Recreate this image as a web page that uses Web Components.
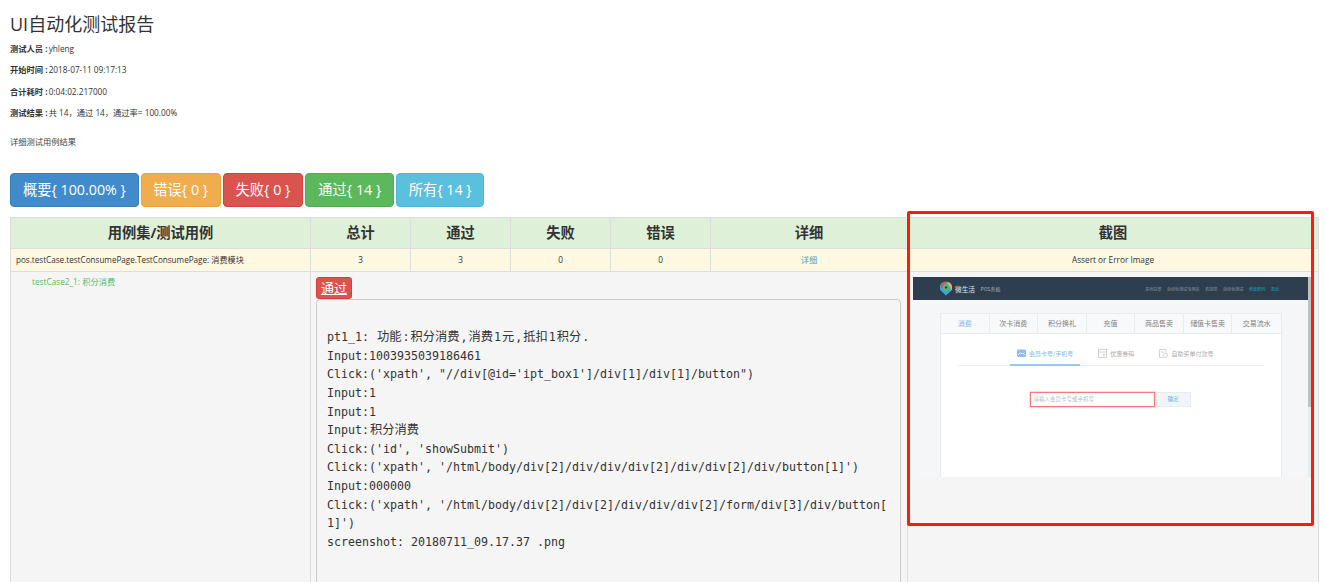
<!DOCTYPE html>
<html>
<head>
<meta charset="utf-8">
<title>UI自动化测试报告</title>
<style>
    html, body { margin: 0; height: 582px; overflow: hidden; background: #fff; }
    body {
        font-family: "Open Sans", "Noto Sans CJK SC", sans-serif;
        color: #333;
    }
    report-page { position: relative; }
    case-log .w { font-size: 12.25px; margin: 0 1px; }
</style>
</head>
<body>
<report-page>
    <report-info slot="info" title-text="UI自动化测试报告">
        <info-line label="测试人员">yhleng</info-line>
        <info-line label="开始时间">2018-07-11 09:17:13</info-line>
        <info-line label="合计耗时">0:04:02.217000</info-line>
        <info-line label="测试结果">共 14，通过 14，通过率= 100.00%</info-line>
    </report-info>
    <filter-bar slot="filters">
        <filter-button kind="primary">概要{ 100.00% }</filter-button>
        <filter-button kind="warning">错误{ 0 }</filter-button>
        <filter-button kind="danger">失败{ 0 }</filter-button>
        <filter-button kind="success">通过{ 14 }</filter-button>
        <filter-button kind="info">所有{ 14 }</filter-button>
    </filter-bar>
    <result-table slot="table">
        <case-log slot="log">
            <div>pt1_1: <span class="w">功能</span>:<span class="w">积分消费</span>,<span class="w">消费</span>1<span class="w">元</span>,<span class="w">抵扣</span>1<span class="w">积分</span>.</div>
            <div>Input:1003935039186461</div>
            <div>Click:('xpath', "//div[@id='ipt_box1']/div[1]/div[1]/button")</div>
            <div>Input:1</div>
            <div>Input:1</div>
            <div>Input:<span class="w">积分消费</span></div>
            <div>Click:('id', 'showSubmit')</div>
            <div>Click:('xpath', '/html/body/div[2]/div/div/div[2]/div/div[2]/div/button[1]')</div>
            <div>Input:000000</div>
            <div>Click:('xpath', '/html/body/div[2]/div[2]/div/div/div[2]/form/div[3]/div/button[1]')</div>
            <div>screenshot: 20180711_09.17.37 .png</div>
        </case-log>
        <pos-shot slot="shot"></pos-shot>
    </result-table>
</report-page>

<script>
class ReportPage extends HTMLElement {
    constructor() {
        super();
        this.attachShadow({ mode: 'open' });
        this.shadowRoot.innerHTML = `
            <style>
                :host { display: block; height: 582px; overflow: hidden; }
                .wrap { display: flex; flex-direction: column; padding: 0 6px 0 10px; }
                .mark {
                    position: absolute;
                    left: 907px;
                    top: 211px;
                    width: 401px;
                    height: 309px;
                    border: 3px solid #ff1a0e;
                    border-radius: 2px;
                    pointer-events: none;
                }
            </style>
            <div class="wrap">
                <slot name="info"></slot>
                <slot name="filters"></slot>
                <slot name="table"></slot>
            </div>
            <div class="mark"></div>
        `;
    }
}

class ReportInfo extends HTMLElement {
    constructor() {
        super();
        this.attachShadow({ mode: 'open' });
        this.shadowRoot.innerHTML = `
            <style>
                :host { display: block; }
                h3 { margin: 0; padding-top: 13px; font-size: 18px; line-height: 22px; font-weight: 400; height: 22px; }
                .lines { display: flex; flex-direction: column; gap: 0; padding-top: 3px; }
                .detail { margin-top: 13px; font-size: 8.25px; line-height: 12px; color: #444; }
            </style>
            <h3>${this.getAttribute('title-text')}</h3>
            <div class="lines"><slot></slot></div>
            <div class="detail">详细测试用例结果</div>
        `;
    }
}

class InfoLine extends HTMLElement {
    constructor() {
        super();
        this.attachShadow({ mode: 'open' });
        this.shadowRoot.innerHTML = `
            <style>
                :host { display: block; height: 21.3px; font-size: 8.25px; line-height: 21.3px; }
                b { font-weight: 700; margin-right: -1px; }
            </style>
            <b>${this.getAttribute('label')} :</b> <slot></slot>
        `;
    }
}

class FilterBar extends HTMLElement {
    constructor() {
        super();
        this.attachShadow({ mode: 'open' });
        this.shadowRoot.innerHTML = `
            <style>
                :host { display: flex; gap: 2px; margin-top: 25px; margin-bottom: 10px; }
            </style>
            <slot></slot>
        `;
    }
}

class FilterButton extends HTMLElement {
    constructor() {
        super();
        this.attachShadow({ mode: 'open' });
        this.shadowRoot.innerHTML = `
            <style>
                :host {
                    --bg: #428bca;
                    --edge: #357ebd;
                    display: block;
                    box-sizing: border-box;
                    height: 34px;
                    padding: 0 11.5px;
                    border: 1px solid var(--edge);
                    border-radius: 4px;
                    background: var(--bg);
                    color: #fff;
                    font-size: 14.25px;
                    line-height: 32px;
                    white-space: nowrap;
                }
                :host([kind="primary"]), :host([kind="success"]), :host([kind="danger"]) { padding: 0 12px; }
                :host([kind="warning"]) { --bg: #f0ad4e; --edge: #eea236; }
                :host([kind="danger"]) { --bg: #d9534f; --edge: #d43f3a; }
                :host([kind="success"]) { --bg: #5cb85c; --edge: #4cae4c; }
                :host([kind="info"]) { --bg: #5bc0de; --edge: #46b8da; }
            </style>
            <slot></slot>
        `;
    }
}

class ResultTable extends HTMLElement {
    constructor() {
        super();
        this.attachShadow({ mode: 'open' });
        const heads = ['用例集/测试用例', '总计', '通过', '失败', '错误', '详细', '截图'];
        this.shadowRoot.innerHTML = `
            <style>
                :host { display: block; }
                .grid {
                    display: grid;
                    grid-template-columns: 300px 100px 100px 100px 100px 197px 411px;
                    grid-template-rows: 31px 23px 330px;
                    border-top: 1px solid #ddd;
                    border-left: 1px solid #ddd;
                }
                .grid > div {
                    box-sizing: border-box;
                    border-right: 1px solid #ddd;
                    border-bottom: 1px solid #ddd;
                }
                .head {
                    background: #dff0d8;
                    font-size: 14.25px;
                    font-weight: 700;
                    line-height: 30px;
                    text-align: center;
                }
                .sum {
                    background: #fef8e3;
                    font-size: 8.25px;
                    line-height: 22px;
                    text-align: center;
                }
                .sum.name { text-align: left; padding-left: 5px; font-size: 8.15px; }
                .sum a { color: #4fa3b5; }
                .body { background: #f5f5f5; }
                .case { padding: 4px 0 0 21px; font-size: 8.25px; line-height: 12px; color: #5cb85c; }
                .log { grid-column: 2 / 7; padding: 5px 5px 0 5px; display: flex; flex-direction: column; align-items: flex-start; }
                .tag {
                    box-sizing: border-box;
                    height: 22px;
                    width: 36px;
                    border-radius: 3px;
                    border: 1px solid #d43f3a;
                    background: #d9534f;
                    color: #fff;
                    font-size: 13px;
                    line-height: 20px;
                    text-align: center;
                    text-decoration: underline;
                }
                .shot { padding: 5px 0 0 5px; }
            </style>
            <div class="grid">
                ${heads.map(h => `<div class="head">${h}</div>`).join('')}
                <div class="sum name">pos.testCase.testConsumePage.TestConsumePage: 消费模块</div>
                <div class="sum">3</div>
                <div class="sum">3</div>
                <div class="sum">0</div>
                <div class="sum">0</div>
                <div class="sum"><a>详细</a></div>
                <div class="sum">Assert or Error Image</div>
                <div class="body case">testCase2_1: 积分消费</div>
                <div class="body log">
                    <span class="tag">通过</span>
                    <slot name="log"></slot>
                </div>
                <div class="body shot"><slot name="shot"></slot></div>
            </div>
        `;
    }
}

class CaseLog extends HTMLElement {
    constructor() {
        super();
        this.attachShadow({ mode: 'open' });
        this.shadowRoot.innerHTML = `
            <style>
                :host {
                    display: block;
                    box-sizing: border-box;
                    align-self: stretch;
                    margin-right: 1px;
                    height: 320px;
                    /* the log starts with an empty line */
                    padding: 28.1px 10px 10px;
                    border: 1px solid #ccc;
                    border-radius: 4px;
                    background: #f5f5f5;
                    font-family: "DejaVu Sans Mono", "Noto Sans CJK SC", monospace;
                    font-size: 11.63px;
                    line-height: 18.6px;
                    color: #333;
                    word-break: break-all;
                    line-break: anywhere;
                }
            </style>
            <slot></slot>
        `;
    }
}

class PosShot extends HTMLElement {
    constructor() {
        super();
        this.attachShadow({ mode: 'open' });
        const menu = ['消费', '次卡消费', '积分换礼', '充值', '商品售卖', '储值卡售卖', '交易流水'];
        this.shadowRoot.innerHTML = `
            <style>
                :host {
                    display: flex;
                    width: 398px;
                    height: 200px;
                    overflow: hidden;
                    font-family: "Noto Sans CJK SC", sans-serif;
                    color: #888;
                }
                .page { width: 395px; flex: none; background: #f5f6f8; }
                .bar { width: 3px; flex: none; background: #ececec; }
                .thumb { height: 130px; background: #c1c1c1; }
                .top {
                    display: flex;
                    align-items: center;
                    box-sizing: border-box;
                    height: 23px;
                    padding: 0 29px 0 27px;
                    background: #2f3e4f;
                    color: #8c98a3;
                    font-size: 4.1px;
                    gap: 5.5px;
                }
                .logo { margin-right: -2.5px; }
                .brand { font-size: 6.7px; color: #dfe4e8; }
                .pos { flex: 1; font-size: 5px; color: #aab3bb; }
                .on { color: #0ea5c6; }
                .card { margin: 13px 26px 0 27px; height: 164px; background: #fff; border: 1px solid #e8ecef; border-bottom: 0; box-sizing: border-box; }
                .menu { display: grid; grid-template-columns: repeat(7, 1fr); height: 20px; background: #f8f9fa; border-bottom: 1px solid #e8ecef; box-sizing: border-box; }
                .menu span { font-size: 7px; line-height: 19px; text-align: center; border-right: 1px solid #e8ecef; color: #808080; white-space: nowrap; }
                .menu span:first-child { color: #7fb1ea; }
                .menu span:last-child { border-right: 0; }
                .tabs { display: flex; gap: 11px; margin: 15px 17px 0; padding-left: 52px; height: 16px; border-bottom: 1px solid #eef1f3; font-size: 6px; }
                .tab { display: flex; align-items: flex-start; gap: 3px; padding: 0 7px; height: 16px; box-sizing: border-box; color: #aaa; line-height: 10px; white-space: nowrap; }
                .tab.on { color: #7fb9ef; border-bottom: 2px solid #8fcbf5; height: 17px; }
                .tab svg { width: 9px; height: 9px; flex: none; }
                .form { display: flex; justify-content: center; gap: 1px; margin-top: 26px; padding-right: 2px; }
                .input { box-sizing: border-box; width: 125px; height: 15px; border: 1px solid #f8787a; box-shadow: 0 0 0 .5px #fba; padding-left: 3px; font-size: 5.5px; line-height: 13px; color: #bbb; }
                .ok { box-sizing: border-box; width: 35px; height: 15px; background: #f2f5f7; border: 1px solid #e8ecef; font-size: 5.5px; line-height: 13px; text-align: center; color: #6aa9e8; }
            </style>
            <div class="page">
                <div class="top">
                    <svg class="logo" width="12" height="15" viewBox="0 0 12 15">
                        <path d="M6 14.5L2 10.8A5.6 5.6 0 0 1 6 .8A5.6 5.6 0 0 1 10 10.8z" fill="#3aa8dc"/>
                        <path d="M.6 6.4A5.6 5.6 0 0 1 8 1.2A5 5 0 0 0 3 6.6z" fill="#e4503e"/>
                        <path d="M7.2 1A5.6 5.6 0 0 1 10 10.8A5 5 0 0 0 9 4.5z" fill="#f3b62f"/>
                        <circle cx="6" cy="6.4" r="2.9" fill="#6fb54a"/>
                        <circle cx="6" cy="6.4" r="1.2" fill="#2f3e4f"/>
                    </svg>
                    <span class="brand">微生活</span>
                    <span class="pos">POS系统</span>
                    <span>深圳总部</span><span>自动化测试专用店</span><span>欢迎您</span><span>自动化测试</span><span class="on">修改密码</span><span class="on">退出</span>
                </div>
                <div class="card">
                    <div class="menu">${menu.map(m => `<span>${m}</span>`).join('')}</div>
                    <div class="tabs">
                        <div class="tab on"><svg viewBox="0 0 9 9"><rect y=".5" width="9" height="7.5" rx="1" fill="#8fbdf0"/><path d="M1 6L3.5 3.5L5 5L6 4L8 6" fill="none" stroke="#fff" stroke-width=".7"/></svg>会员卡号/手机号</div>
                        <div class="tab"><svg viewBox="0 0 9 9" fill="none" stroke="#c8c8c8" stroke-width=".8"><rect x=".5" y=".5" width="8" height="8"/><path d="M.5 3H8.5M5 5.5H7M6 5V7"/></svg>优惠券码</div>
                        <div class="tab"><svg viewBox="0 0 9 9" fill="none" stroke="#c8c8c8" stroke-width=".8"><path d="M4 8.5H.5V.5H7V3.5M2 3H5"/><circle cx="6.3" cy="6.3" r="2.2"/></svg>自助买单付款号</div>
                    </div>
                    <div class="form">
                        <div class="input">请输入会员卡号或手机号</div>
                        <div class="ok">确定</div>
                    </div>
                </div>
            </div>
            <div class="bar"><div class="thumb"></div></div>
        `;
    }
}

customElements.define('report-page', ReportPage);
customElements.define('report-info', ReportInfo);
customElements.define('info-line', InfoLine);
customElements.define('filter-bar', FilterBar);
customElements.define('filter-button', FilterButton);
customElements.define('result-table', ResultTable);
customElements.define('case-log', CaseLog);
customElements.define('pos-shot', PosShot);
</script>
</body>
</html>
